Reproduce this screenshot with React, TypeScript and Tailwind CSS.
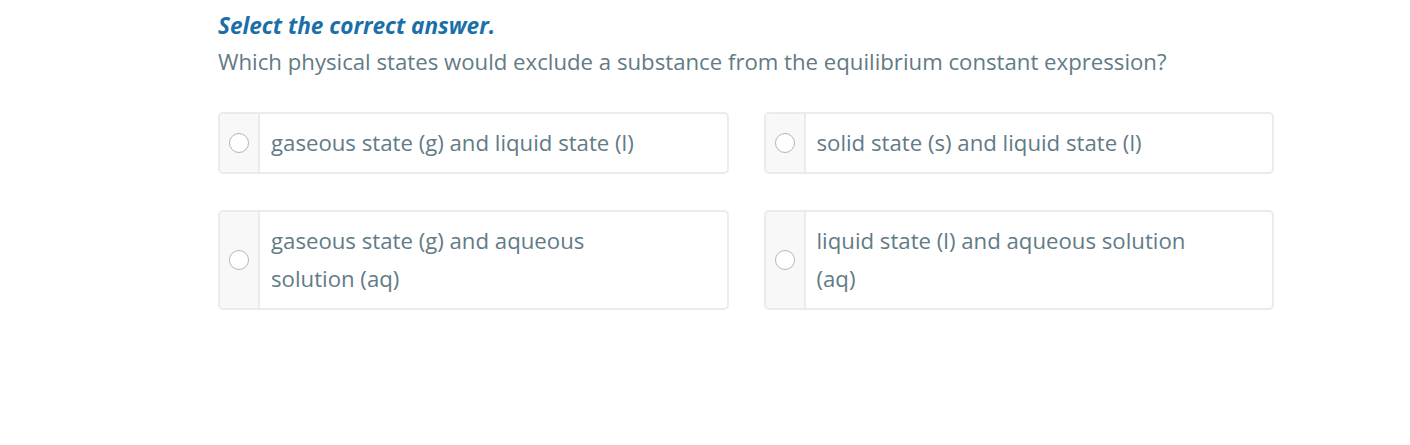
import React, { useState } from 'react';

const options = [
  'gaseous state (g) and liquid state (l)',
  'solid state (s) and liquid state (l)',
  'gaseous state (g) and aqueous solution (aq)',
  'liquid state (l) and aqueous solution (aq)',
];

const App: React.FC = () => {
  const [selected, setSelected] = useState<number | null>(null);

  return (
    <div className="w-[1410px] h-[445px] bg-white" style={{ fontFamily: '"Open Sans", "Noto Sans", sans-serif' }}>
      <div className="ml-[218px] w-[1056px] pt-[11px]">
        <h2 className="text-[22.6px] leading-[30px] font-bold italic text-[#1b6fa8]">Select the correct answer.</h2>
        <p className="mt-[6px] text-[22.2px] leading-[30px] text-[#627b86]">
          Which physical states would exclude a substance from the equilibrium constant expression?
        </p>

        <div className="grid grid-cols-2 gap-x-[35px] gap-y-[36px] mt-[35px]">
          {options.map((opt, i) => (
            <label
              key={i}
              onClick={() => setSelected(i)}
              className={`flex items-stretch rounded-[5px] border-2 border-[#ebebeb] cursor-pointer overflow-hidden ${i < 2 ? 'h-[62px]' : 'h-[100px]'}`}
            >
              <div className="w-[40px] shrink-0 bg-[#f8f8f8] border-r-2 border-[#ebebeb] flex items-center justify-center">
                <span className="w-[20px] h-[20px] rounded-full border border-[#b5b5b5] bg-white flex items-center justify-center">
                  {selected === i && <span className="w-[10px] h-[10px] rounded-full bg-[#1b6fa8]" />}
                </span>
              </div>
              <div className="flex items-center pl-[11px] pr-[66px] text-[22.2px] leading-[38px] text-[#627b86]">
                {opt}
              </div>
            </label>
          ))}
        </div>
      </div>
    </div>
  );
};

export default App;
